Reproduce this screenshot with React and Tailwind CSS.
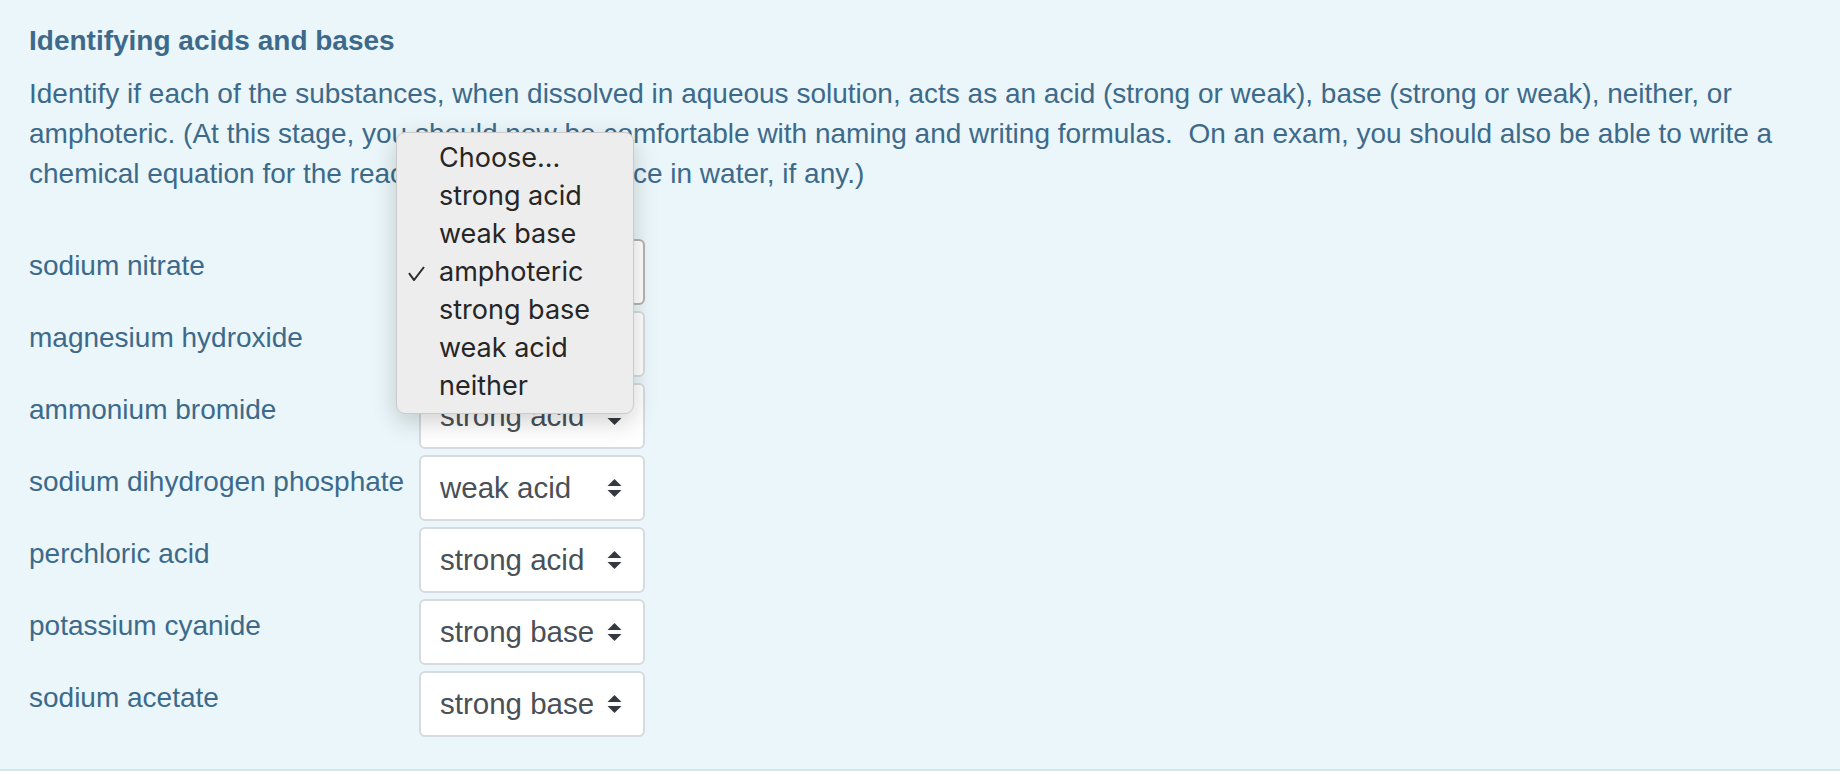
import { useState } from 'react';

const rows = [
  { name: 'sodium nitrate', value: 'amphoteric' },
  { name: 'magnesium hydroxide', value: 'weak base' },
  { name: 'ammonium bromide', value: 'strong acid' },
  { name: 'sodium dihydrogen phosphate', value: 'weak acid' },
  { name: 'perchloric acid', value: 'strong acid' },
  { name: 'potassium cyanide', value: 'strong base' },
  { name: 'sodium acetate', value: 'strong base' },
];

const options = ['Choose...', 'strong acid', 'weak base', 'amphoteric', 'strong base', 'weak acid', 'neither'];

function Arrows() {
  return (
    <svg width="15" height="18" viewBox="0 0 15 18" className="shrink-0">
      <polygon points="0.5,7 7.5,0 14.5,7" fill="#343a40" />
      <polygon points="0.5,11 14.5,11 7.5,18" fill="#343a40" />
    </svg>
  );
}

function Menu({ selected }) {
  return (
    <div className="absolute left-[-23px] top-[-107px] z-10 w-[238px] rounded-[9px] border border-[#cacaca] bg-[#ededed] pt-[6px] pb-[8px] shadow-[0_8px_24px_rgba(0,0,0,0.18)] font-['Inter',sans-serif] text-[27px] leading-[38px] text-[#262626]">
      {options.map((opt) => (
        <div key={opt} className="relative pl-[42px]">
          {opt === selected && (
            <svg width="17" height="15" viewBox="0 0 17 15" className="absolute left-[11px] top-[13px]">
              <path d="M1 7.2 L6 14 L16 1" fill="none" stroke="#2a2a2a" strokeWidth="2" />
            </svg>
          )}
          {opt}
        </div>
      ))}
    </div>
  );
}

function Select({ value, open }) {
  return (
    <div className="relative">
      <div
        className={
          'flex h-[66px] w-[226px] items-center justify-between rounded-[6px] border-2 bg-white pl-[19px] pr-[21px] text-[29.5px] text-[#495057] ' +
          (open ? 'border-[#b3b3b3]' : 'border-[#d5dbe0]')
        }
      >
        <span className="whitespace-nowrap">{value}</span>
        <Arrows />
      </div>
      {open && <Menu selected={value} />}
    </div>
  );
}

export default function App() {
  const [openRow] = useState(0);

  return (
    <div className="min-h-[771px] border-b-2 border-[#cfe7ee] bg-[#eaf6f9] px-[29px] pt-6 pb-[32px] font-['Liberation_Sans',Arial,sans-serif] text-[#3d6a8b]">
      <h3 className="text-[28px] font-bold leading-[34px]">Identifying acids and bases</h3>
      <p className="mt-4 text-[28px] leading-[40px]">
        Identify if each of the substances, when dissolved in aqueous solution, acts as an acid (strong or weak), base (strong or weak), neither, or amphoteric. (At this stage, you should now be comfortable with naming and writing formulas.{'\u00a0'} On an exam, you should also be able to write a chemical equation for the reaction of the substance in water, if any.)
      </p>

      <div className="mt-[45px] flex flex-col gap-[6px]">
        {rows.map((row, i) => (
          <div key={row.name} className="flex">
            <div className="w-[390px] pt-[7px] text-[28px] leading-[40px]">{row.name}</div>
            <Select value={row.value} open={i === openRow} />
          </div>
        ))}
      </div>
    </div>
  );
}
